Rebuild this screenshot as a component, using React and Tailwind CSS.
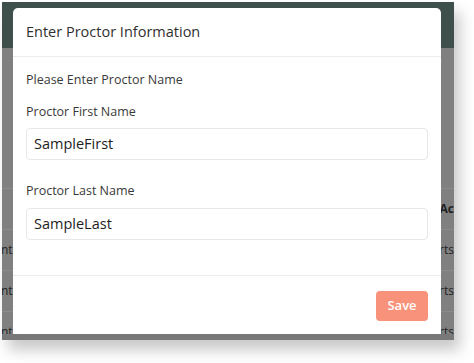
import React from 'react'

const font = { fontFamily: '"Open Sans", "Noto Sans", sans-serif' }

function BackRow({ left, right, bold = false }) {
    return (
        <div className="flex h-[41px] items-center justify-between border-t border-[#8b8b8b] text-[12px] text-[#1f1f1f]">
            <span className="-ml-[1px]">{left}</span>
            <span className={bold ? 'font-bold' : ''}>{right}</span>
        </div>
    )
}

export default function App() {
    return (
        <div className="h-[363px] w-[474px] bg-white" style={font}>
            <div className="relative ml-[2px] pt-[2px]">
                <div className="relative h-[338px] w-[452px] overflow-hidden bg-[#808080] shadow-[6px_10px_14px_rgba(0,0,0,0.22)]">
                    <div className="h-[46px] bg-[#3e4f4c]" />
                    <div className="mt-[140px]">
                        <BackRow left="" right="Ac" bold />
                        <BackRow left="nt" right="rts" />
                        <BackRow left="nt" right="rts" />
                        <BackRow left="nt" right="rts" />
                    </div>
                    <div className="absolute bottom-0 left-0 right-0 h-[6px] bg-[#787878]" />

                    <div className="absolute left-[11px] top-[6px] flex h-[326px] w-[428px] flex-col rounded-t-[5px] bg-white">
                        <div className="flex h-[49px] items-center border-b border-[#ececec] px-[13px] text-[14.5px] text-[#303030]">
                            Enter Proctor Information
                        </div>
                        <div className="flex-1 px-[13px] pt-[13px] text-[12.5px] text-[#3a3a3a]">
                            <p className="leading-[20px]">Please Enter Proctor Name</p>
                            <label className="mt-[12px] block leading-[20px]">Proctor First Name</label>
                            <div className="mt-[6px] flex h-[32px] items-center rounded-[4px] border border-[#e8e8e8] px-[7px] text-[14.5px] text-[#1e1e1e]">
                                SampleFirst
                            </div>
                            <label className="mt-[21px] block leading-[20px]">Proctor Last Name</label>
                            <div className="mt-[7px] flex h-[32px] items-center rounded-[4px] border border-[#e8e8e8] px-[7px] text-[14.5px] text-[#1e1e1e]">
                                SampleLast
                            </div>
                        </div>
                        <div className="flex h-[59px] justify-end border-t border-[#ececec] px-[13px] pt-[15px]">
                            <button className="h-[30px] w-[52px] rounded-[4px] bg-[#f9927a] text-[13px] font-semibold text-white">
                                Save
                            </button>
                        </div>
                    </div>
                </div>
            </div>
        </div>
    )
}
